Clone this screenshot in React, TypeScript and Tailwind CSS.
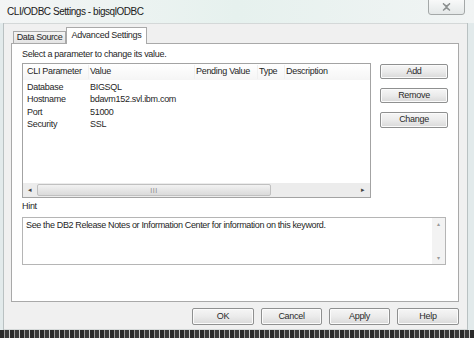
import React from "react";

const font = "font-['Liberation_Sans',Arial,sans-serif]";

const rows = [
  { name: "Database", value: "BIGSQL" },
  { name: "Hostname", value: "bdavm152.svl.ibm.com" },
  { name: "Port", value: "51000" },
  { name: "Security", value: "SSL" },
];

function Button({ label, className }: { label: string; className: string }) {
  return (
    <div
      className={`flex items-center justify-center rounded-[2px] border border-[#8f9090] bg-gradient-to-b from-[#f6f6f6] via-[#ebebeb] to-[#d9d9d9] text-[9px] tracking-[-0.3px] text-[#2a2a2a] shadow-[inset_0_0_0_1px_#fbfbfb] ${className}`}
    >
      {label}
    </div>
  );
}

export default function App() {
  return (
    <div className={`${font} flex h-[338px] w-[474px] flex-col overflow-hidden bg-[#eef2f2] text-[#262626]`}>
      {/* Title bar */}
      <div className="flex h-[23px] shrink-0 items-start bg-gradient-to-r from-[#f3f5f5] via-[#e6f1ee] to-[#f1f4f4]">
        <div className="pl-[7px] pt-[5px] text-[10px] leading-[13px] tracking-[-0.45px] text-[#202020]">
          CLI/ODBC Settings - bigsqlODBC
        </div>
        <div className="ml-auto mr-[9px] mt-[-1px] flex h-[16px] w-[37px] items-center justify-center rounded-b-[3px] border border-[#a4a8a8] bg-gradient-to-b from-[#f8f9f9] to-[#e4e8e8]">
          <svg width="9" height="8" viewBox="0 0 9 8">
            <path
              d="M1 0.5 L4.5 3 L8 0.5 M1 7.5 L4.5 5 L8 7.5 M1 0.5 L8 7.5 M8 0.5 L1 7.5"
              stroke="#8c9090"
              strokeWidth="1.1"
              fill="none"
            />
          </svg>
        </div>
      </div>

      {/* Body */}
      <div className="flex h-[307px] shrink-0">
        <div className="w-[4px] border-r border-[#b9c1c2] bg-[#e2eaeb]" />
        <div className="flex w-[463px] flex-col border-y border-[#d4d8d8] bg-[#f0f0f0] px-[7px]">
          {/* Tabs */}
          <div className="flex h-[19px] items-end pl-[2px]">
            <div className="flex h-[12px] w-[53px] items-center justify-center border border-b-0 border-[#a9a9a9] bg-gradient-to-b from-[#f4f4f4] to-[#e4e4e4] text-[9px] tracking-[-0.4px]">
              Data Source
            </div>
            <div className="relative z-10 mb-[-1px] flex h-[17px] w-[81px] items-start justify-center border border-b-0 border-[#a9a9a9] bg-white pt-[1px] text-[9px] tracking-[-0.3px]">
              Advanced Settings
            </div>
          </div>

          {/* Panel */}
          <div className="flex h-[259px] w-[448px] flex-col border border-[#a9a9a9] bg-white px-[10px] pt-[4px]">
            <div className="h-[12px] text-[9px] leading-[12px] tracking-[-0.3px]">
              Select a parameter to change its value.
            </div>
            <div className="mt-[3px] flex gap-[9px]">
              {/* List */}
              <div className="flex h-[135px] w-[353px] flex-col border border-[#a3a3a3]">
                <div className="flex h-[16px] items-center bg-gradient-to-b from-white to-[#f5f5f5] text-[9px] tracking-[-0.3px]">
                  <div className="w-[66px] border-r border-[#f0f0f0] pl-[4px]">CLI Parameter</div>
                  <div className="w-[106px] border-r border-[#f0f0f0] pl-[1px]">Value</div>
                  <div className="w-[63px] border-r border-[#f0f0f0] pl-[1px]">Pending Value</div>
                  <div className="w-[27px] border-r border-[#f0f0f0] pl-[1px]">Type</div>
                  <div className="pl-[1px]">Description</div>
                </div>
                <div className="flex-1 pt-[1px]">
                  {rows.map((r) => (
                    <div key={r.name} className="flex h-[12.5px] items-center text-[9px] tracking-[-0.3px]">
                      <div className="w-[66px] pl-[4px]">{r.name}</div>
                      <div className="pl-[1px]">{r.value}</div>
                    </div>
                  ))}
                </div>
                {/* Horizontal scrollbar */}
                <div className="flex h-[14px] items-center bg-[#ececec]">
                  <div className="flex w-[14px] items-center justify-center text-[7px] text-[#444]">◂</div>
                  <div className="flex h-[12px] w-[234px] items-center justify-center rounded-[2px] border border-[#c0c0c0] bg-gradient-to-b from-[#f2f2f2] to-[#dadada]">
                    <span className="text-[7px] leading-none tracking-[0.5px] text-[#8a8a8a]">III</span>
                  </div>
                  <div className="flex-1" />
                  <div className="flex w-[14px] items-center justify-center text-[7px] text-[#444]">▸</div>
                </div>
              </div>
              {/* Side buttons */}
              <div className="flex flex-col gap-[9px] pt-[1px]">
                <Button label="Add" className="h-[15px] w-[68px]" />
                <Button label="Remove" className="h-[15px] w-[68px]" />
                <Button label="Change" className="h-[16px] w-[68px]" />
              </div>
            </div>
            <div className="mt-[2px] h-[12px] text-[9px] leading-[12px] tracking-[-0.3px]">Hint</div>
            <div className="mt-[5px] flex h-[48px] w-[424px] border border-[#b5b5b5] bg-white">
              <div className="flex-1 pl-[3px] pt-[1px] text-[9px] leading-[12px] tracking-[-0.35px]">
                See the DB2 Release Notes or Information Center for information on this keyword.
              </div>
              <div className="flex w-[13px] flex-col items-center justify-between bg-[#f3f3f3] py-[3px] text-[6px] leading-none text-[#9a9a9a]">
                <span>▴</span>
                <span>▾</span>
              </div>
            </div>
          </div>

          {/* Dialog buttons */}
          <div className="flex justify-end gap-[7px] pr-[1px] pt-[6px]">
            <Button label="OK" className="h-[17px] w-[62px]" />
            <Button label="Cancel" className="h-[17px] w-[61px]" />
            <Button label="Apply" className="h-[17px] w-[61px]" />
            <Button label="Help" className="h-[17px] w-[62px]" />
          </div>
        </div>
        <div className="w-[7px] border-l border-[#b9c1c2] bg-[#e2eaeb]" />
      </div>

      {/* Bottom strip */}
      <div className="h-[8px] shrink-0 bg-[repeating-linear-gradient(90deg,#2a2a2a_0px,#2a2a2a_4px,#9a9a9a_4px,#9a9a9a_5px,#3a3a3a_5px,#3a3a3a_9px,#c8c8c8_9px,#c8c8c8_10px)]" />
    </div>
  );
}
